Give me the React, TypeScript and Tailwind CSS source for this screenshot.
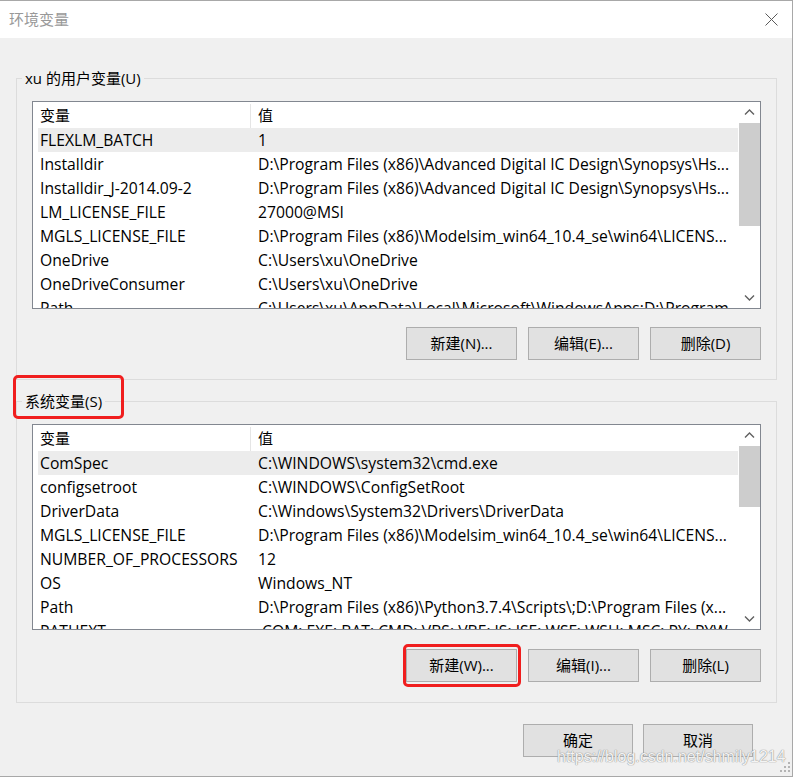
import React from "react";

type Row = { name: string; value: string };

const userRows: Row[] = [
  { name: "FLEXLM_BATCH", value: "1" },
  { name: "Installdir", value: "D:\\Program Files (x86)\\Advanced Digital IC Design\\Synopsys\\Hs..." },
  { name: "Installdir_J-2014.09-2", value: "D:\\Program Files (x86)\\Advanced Digital IC Design\\Synopsys\\Hs..." },
  { name: "LM_LICENSE_FILE", value: "27000@MSI" },
  { name: "MGLS_LICENSE_FILE", value: "D:\\Program Files (x86)\\Modelsim_win64_10.4_se\\win64\\LICENS..." },
  { name: "OneDrive", value: "C:\\Users\\xu\\OneDrive" },
  { name: "OneDriveConsumer", value: "C:\\Users\\xu\\OneDrive" },
  { name: "Path", value: "C:\\Users\\xu\\AppData\\Local\\Microsoft\\WindowsApps;D:\\Program..." },
];

const systemRows: Row[] = [
  { name: "ComSpec", value: "C:\\WINDOWS\\system32\\cmd.exe" },
  { name: "configsetroot", value: "C:\\WINDOWS\\ConfigSetRoot" },
  { name: "DriverData", value: "C:\\Windows\\System32\\Drivers\\DriverData" },
  { name: "MGLS_LICENSE_FILE", value: "D:\\Program Files (x86)\\Modelsim_win64_10.4_se\\win64\\LICENS..." },
  { name: "NUMBER_OF_PROCESSORS", value: "12" },
  { name: "OS", value: "Windows_NT" },
  { name: "Path", value: "D:\\Program Files (x86)\\Python3.7.4\\Scripts\\;D:\\Program Files (x..." },
  { name: "PATHEXT", value: ".COM;.EXE;.BAT;.CMD;.VBS;.VBE;.JS;.JSE;.WSF;.WSH;.MSC;.PY;.PYW" },
];

function Chevron({ down }: { down?: boolean }) {
  return (
    <svg width="11" height="7" viewBox="0 0 11 7" fill="none">
      <path
        d={down ? "M1 1.5 L5.5 6 L10 1.5" : "M1 5.5 L5.5 1 L10 5.5"}
        stroke="#606060"
        strokeWidth="1.4"
      />
    </svg>
  );
}

function VarList({
  rows,
  heightClass,
  thumbClass,
}: {
  rows: Row[];
  heightClass: string;
  thumbClass: string;
}) {
  return (
    <div className={`${heightClass} flex overflow-hidden border border-[#828790] bg-white`}>
      <div className="flex min-w-0 flex-1 flex-col overflow-hidden pl-[5px] text-[15.7px]">
        <div className="flex h-[26px] shrink-0 items-center pt-[1px] text-[15px]">
          <div className="w-[212px] shrink-0 pl-[2px]">变量</div>
          <div className="flex h-[24px] flex-1 items-center border-l border-[#e5e5e5] pl-[7px]">值</div>
        </div>
        {rows.map((row, i) => (
          <div
            key={row.name}
            className={`flex h-[24px] shrink-0 items-center whitespace-nowrap pt-[2px] ${i === 0 ? "bg-[#ececec]" : ""}`}
          >
            <div className="w-[212px] shrink-0 overflow-hidden pl-[2px]">{row.name}</div>
            <div className="min-w-0 flex-1 overflow-hidden pl-[8px]">{row.value}</div>
          </div>
        ))}
      </div>
      <div className="flex w-[22px] shrink-0 flex-col bg-white">
        <div className="flex h-[21px] shrink-0 items-center justify-center">
          <Chevron />
        </div>
        <div className="flex-1">
          <div className={`${thumbClass} ml-[1px] w-[21px] bg-[#cdcdcd]`} />
        </div>
        <div className="flex h-[21px] shrink-0 items-center justify-center">
          <Chevron down />
        </div>
      </div>
    </div>
  );
}

function Button({ label, widthClass = "w-[111px]" }: { label: string; widthClass?: string }) {
  return (
    <button
      type="button"
      className={`${widthClass} h-[33px] border border-[#adadad] bg-[#e1e1e1] text-center text-[15px] text-black`}
    >
      {label}
    </button>
  );
}

function GroupBox({
  title,
  children,
  className,
}: {
  title: string;
  children: React.ReactNode;
  className: string;
}) {
  return (
    <div className={`border border-[#dcdcdc] px-[15px] ${className}`}>
      <div className="-mt-[11px] ml-[-10px] h-[20px] w-fit bg-[#f0f0f0] px-[3px] leading-[20px]">
        {title}
      </div>
      {children}
    </div>
  );
}

export default function App() {
  return (
    <div
      className="relative h-[777px] w-[794px] overflow-hidden bg-white text-[15px] text-black"
      style={{ fontFamily: '"Open Sans", "Noto Sans CJK SC", sans-serif' }}
    >
      <div className="flex h-[777px] w-[793px] flex-col border-t border-r border-b border-[#a8a8a8]">
        <div className="flex h-[37px] shrink-0 items-center justify-between bg-white pl-[9px] pr-[14px]">
          <span className="text-[15px] text-[#999999]">环境变量</span>
          <svg width="13" height="13" viewBox="0 0 13 13">
            <path d="M0.5 0.5 L12.5 12.5 M12.5 0.5 L0.5 12.5" stroke="#5a5a5a" strokeWidth="1" />
          </svg>
        </div>

        <div className="flex flex-1 flex-col bg-[#f0f0f0] pl-[16px] pr-[15px]">
          <GroupBox title="xu 的用户变量(U)" className="mt-[40px] pb-[19px]">
            <div className="mt-[13px]">
              <VarList rows={userRows} heightClass="h-[208px]" thumbClass="h-[103px]" />
            </div>
            <div className="mt-[18px] flex justify-end gap-[11px]">
              <Button label="新建(N)..." />
              <Button label="编辑(E)..." />
              <Button label="删除(D)" />
            </div>
          </GroupBox>

          <GroupBox title="系统变量(S)" className="mt-[21px] pb-[20px]">
            <div className="mt-[13px]">
              <VarList rows={systemRows} heightClass="h-[206px]" thumbClass="h-[61px]" />
            </div>
            <div className="mt-[19px] flex justify-end gap-[11px]">
              <Button label="新建(W)..." />
              <Button label="编辑(I)..." />
              <Button label="删除(L)" />
            </div>
          </GroupBox>

          <div className="mt-[21px] flex justify-end gap-[10px] pr-[24px]">
            <Button label="确定" widthClass="w-[110px]" />
            <Button label="取消" widthClass="w-[110px]" />
          </div>
        </div>
      </div>

      {/* red annotation marks */}
      <div className="absolute left-[13px] top-[375px] h-[44px] w-[111px] rounded-[5px] border-[3px] border-[#f01e1e]" />
      <div className="absolute left-[403px] top-[644px] h-[43px] w-[118px] rounded-[5px] border-[3px] border-[#f01e1e]" />

      {/* watermark */}
      <div
        className="absolute left-[557px] top-[747px] text-[16px] leading-[20px] text-white/90 [text-shadow:0_0_1px_#8a8a8a,0_0_1px_#8a8a8a]"
        style={{ fontFamily: '"Liberation Sans", Arial, sans-serif' }}
      >
        https://blog.csdn.net/shmily1214
      </div>

      {/* size grip */}
      <svg className="absolute left-[780px] top-[762px]" width="10" height="10" viewBox="0 0 10 10">
        <rect x="8" y="0" width="2" height="2" fill="#b4b4b4" />
        <rect x="4" y="4" width="2" height="2" fill="#b4b4b4" />
        <rect x="8" y="4" width="2" height="2" fill="#b4b4b4" />
        <rect x="0" y="8" width="2" height="2" fill="#b4b4b4" />
        <rect x="4" y="8" width="2" height="2" fill="#b4b4b4" />
        <rect x="8" y="8" width="2" height="2" fill="#b4b4b4" />
      </svg>
    </div>
  );
}
